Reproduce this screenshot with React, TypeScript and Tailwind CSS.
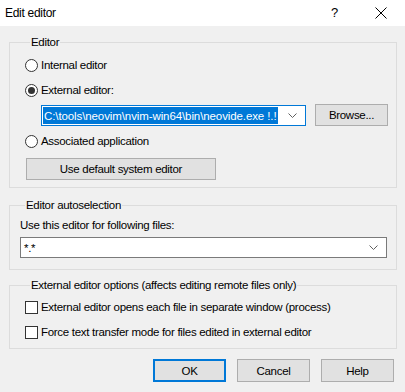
import React from "react";

const font = { fontFamily: '"Liberation Sans", Arial, sans-serif' };

function Radio({ checked, label }: { checked?: boolean; label: string }) {
  return (
    <div className="flex h-[16px] items-center">
      <span className="flex h-[13px] w-[13px] items-center justify-center rounded-full border border-[#333] bg-white">
        {checked && <span className="h-[7px] w-[7px] rounded-full bg-[#333]" />}
      </span>
      <span className="ml-[3px]">{label}</span>
    </div>
  );
}

function Check({ label }: { label: string }) {
  return (
    <div className="flex h-[16px] items-center">
      <span className="h-[13px] w-[13px] border border-[#333] bg-white" />
      <span className="ml-[3px]">{label}</span>
    </div>
  );
}

function Chevron() {
  return (
    <svg width="9" height="5" viewBox="0 0 9 5" className="shrink-0">
      <path d="M0.5 0.5 L4.5 4.5 L8.5 0.5" fill="none" stroke="#606060" strokeWidth="1" />
    </svg>
  );
}

function Btn({ children, className = "" }: { children: React.ReactNode; className?: string }) {
  return (
    <div className={`flex items-center justify-center border border-[#adadad] bg-[#e1e1e1] ${className}`}>
      {children}
    </div>
  );
}

export default function App() {
  return (
    <div
      className="flex h-[392px] w-[405px] flex-col bg-[#f0f0f0] text-[11.5px] leading-[16px] tracking-[-0.3px] text-black"
      style={font}
    >
      <div className="flex h-[26px] shrink-0 items-center bg-white pl-[5px] text-[12px]">
        <span className="flex-1">Edit editor</span>
        <span className="mr-[37px] text-[13px]">?</span>
        <svg width="12" height="12" viewBox="0 0 12 12" className="mr-[18px]">
          <path d="M0.5 0.5 L11.5 11.5 M11.5 0.5 L0.5 11.5" stroke="#000" strokeWidth="1" />
        </svg>
      </div>

      <div className="flex flex-col pl-[9px] pr-[8px]">
        <fieldset className="mt-[8px] border border-[#dcdcdc] pb-[7px] pl-[15px]">
          <legend className="ml-[5px] px-[1px]">Editor</legend>
          <div className="mt-[7px]">
            <Radio label="Internal editor" />
          </div>
          <div className="mt-[9px]">
            <Radio checked label="External editor:" />
          </div>
          <div className="mt-[7px] ml-[16px] flex items-start">
            <div className="flex h-[21px] w-[265px] items-center border border-[#0078d7] bg-white pl-[1px] pr-[8px]">
              <span className="flex h-[17px] items-center whitespace-nowrap bg-[#0078d7] px-[1px] tracking-[-0.1px] text-white">
                C:\tools\neovim\nvim-win64\bin\neovide.exe !.!
              </span>
              <span className="flex-1" />
              <Chevron />
            </div>
            <Btn className="ml-[9px] -mt-[1px] h-[22px] w-[73px]">Browse...</Btn>
          </div>
          <div className="mt-[7px]">
            <Radio label="Associated application" />
          </div>
          <Btn className="mt-[9px] ml-[1px] h-[22px] w-[190px]">Use default system editor</Btn>
        </fieldset>

        <fieldset className="mt-[9px] border border-[#dcdcdc] pb-[11px] pl-[10px]">
          <legend className="ml-[5px] px-[1px]">Editor autoselection</legend>
          <div className="mt-[4px] h-[16px]">Use this editor for following files:</div>
          <div className="mt-[4px] flex h-[21px] w-[367px] items-center border border-[#7a7a7a] bg-white pl-[3px] pr-[8px]">
            <span className="flex-1">*.*</span>
            <Chevron />
          </div>
        </fieldset>

        <fieldset className="mt-[7px] border border-[#dcdcdc] pb-[8px] pl-[15px]">
          <legend className="ml-[5px] px-[1px]">External editor options (affects editing remote files only)</legend>
          <div className="mt-[6px]">
            <Check label="External editor opens each file in separate window (process)" />
          </div>
          <div className="mt-[9px]">
            <Check label="Force text transfer mode for files edited in external editor" />
          </div>
        </fieldset>
      </div>

      <div className="mt-[10px] flex justify-end gap-[11px] pr-[11px]">
        <Btn className="h-[23px] w-[73px] !border-2 !border-[#0078d7]">OK</Btn>
        <Btn className="h-[23px] w-[73px]">Cancel</Btn>
        <Btn className="h-[23px] w-[73px]">Help</Btn>
      </div>
    </div>
  );
}
